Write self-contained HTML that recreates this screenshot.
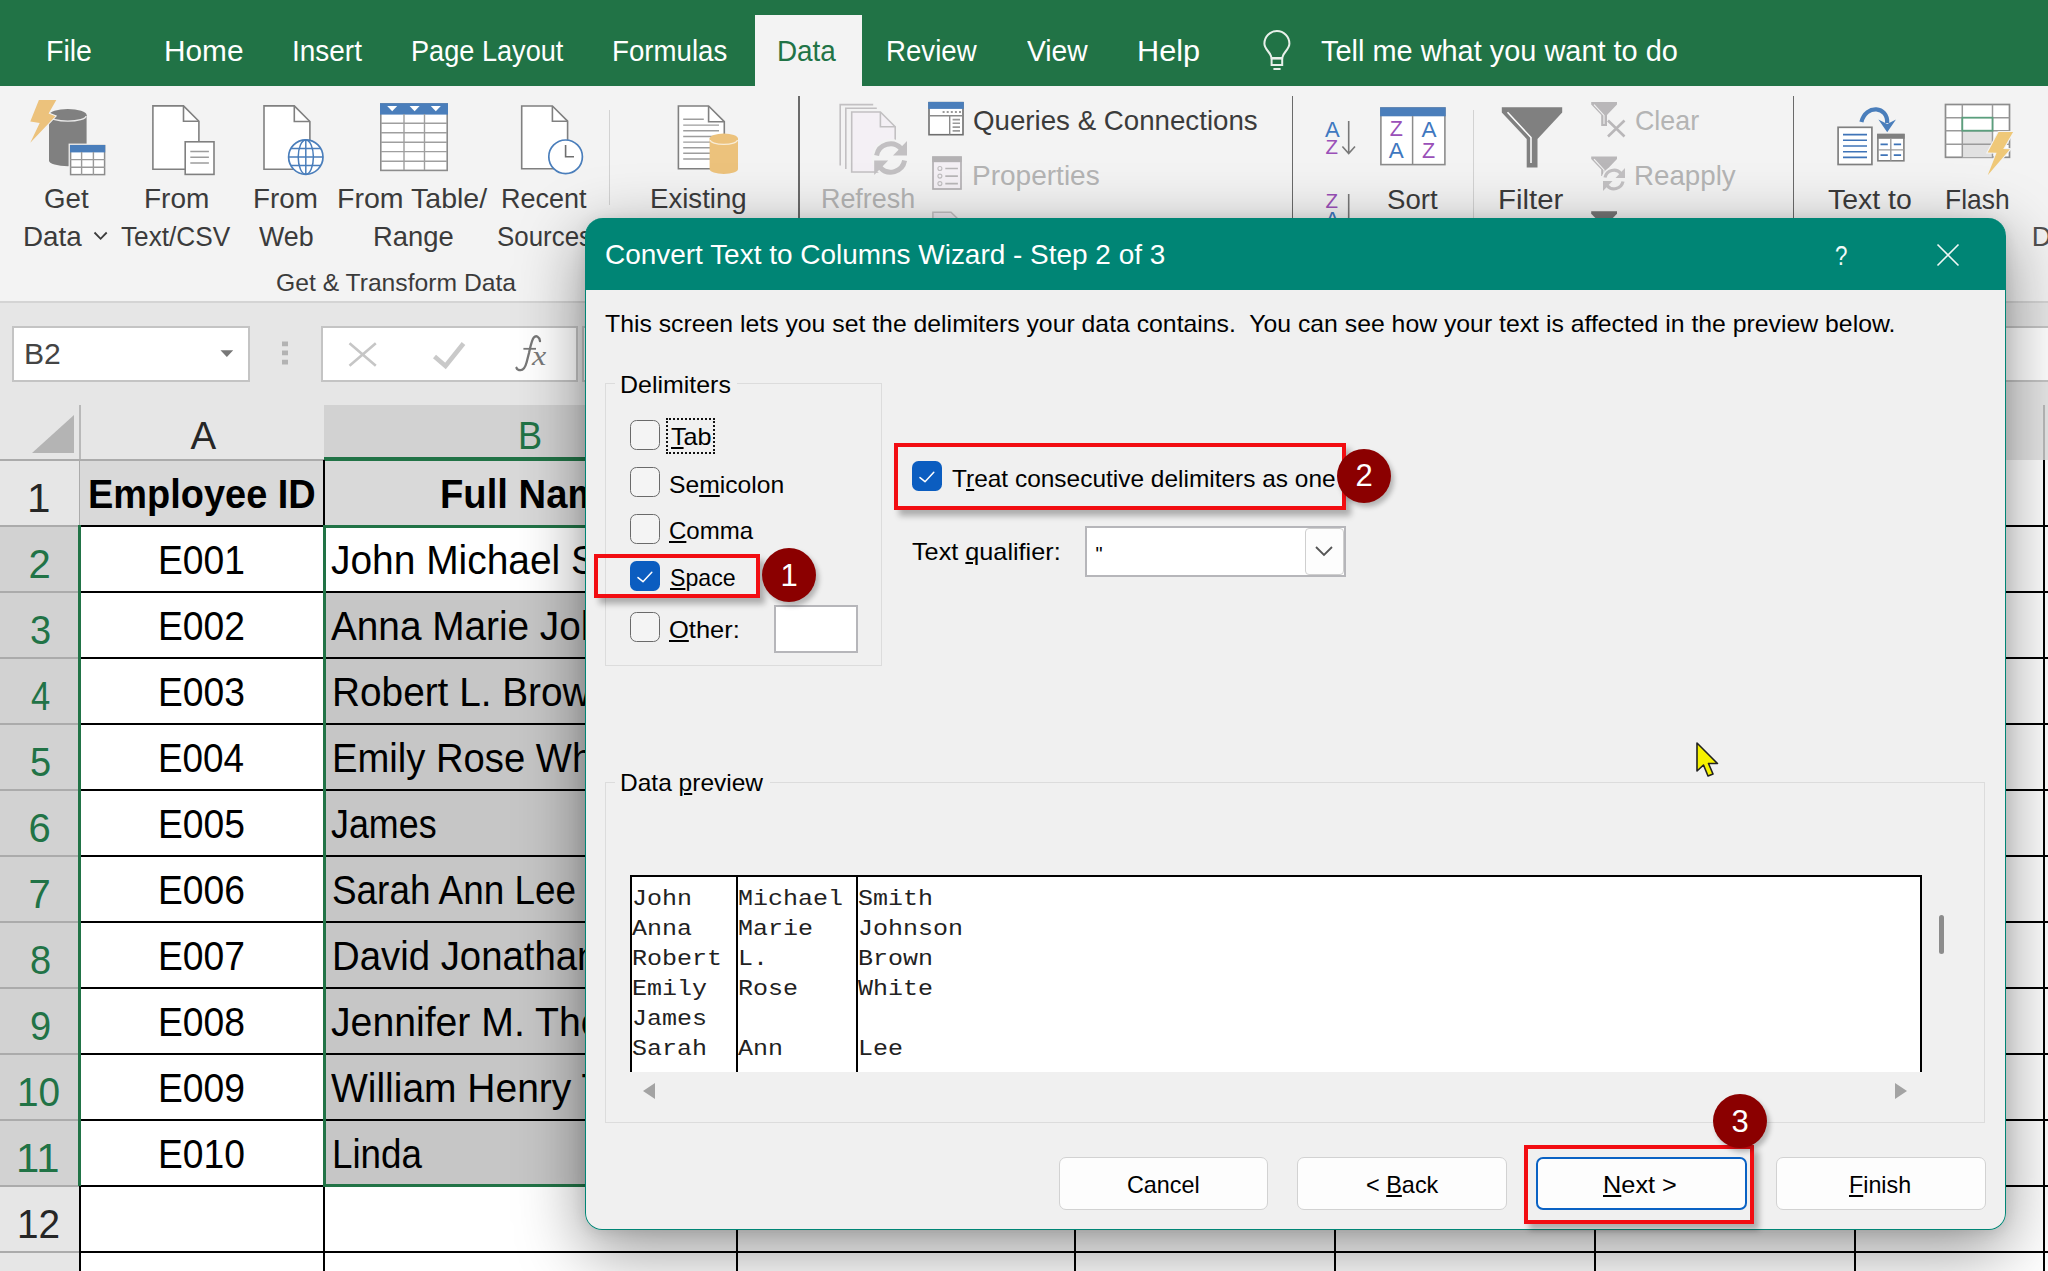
<!DOCTYPE html>
<html><head><meta charset="utf-8"><title>Excel - Convert Text to Columns Wizard</title><style>
html,body{margin:0;padding:0;}
body{width:2048px;height:1271px;overflow:hidden;position:relative;background:#fff;font-family:"Liberation Sans",sans-serif;}
#root{position:absolute;left:0;top:0;width:2048px;height:1271px;overflow:hidden;}
#root div,#root svg{position:absolute;}
.t{position:absolute;white-space:pre;transform-origin:0 50%;}
u{text-decoration:underline;text-decoration-thickness:2px;text-underline-offset:2px;}
</style></head><body><div id="root">
<div style="left:0px;top:0px;width:2048px;height:86.5px;background:#217346;"></div>
<div style="left:755px;top:15px;width:107px;height:72px;background:#f3f3f3;"></div>
<span class="t" style="left:45.51px;top:36.59px;font-size:28.6px;line-height:28.6px;color:#fff;transform:scaleX(0.9960);">File</span>
<span class="t" style="left:163.91px;top:36.59px;font-size:28.6px;line-height:28.6px;color:#fff;transform:scaleX(1.0426);">Home</span>
<span class="t" style="left:292.05px;top:36.59px;font-size:28.6px;line-height:28.6px;color:#fff;transform:scaleX(0.9775);">Insert</span>
<span class="t" style="left:410.6px;top:36.59px;font-size:28.6px;line-height:28.6px;color:#fff;transform:scaleX(0.9487);">Page Layout</span>
<span class="t" style="left:612.07px;top:36.59px;font-size:28.6px;line-height:28.6px;color:#fff;transform:scaleX(0.9669);">Formulas</span>
<span class="t" style="left:886.07px;top:36.59px;font-size:28.6px;line-height:28.6px;color:#fff;transform:scaleX(0.9663);">Review</span>
<span class="t" style="left:1027.0px;top:36.59px;font-size:28.6px;line-height:28.6px;color:#fff;transform:scaleX(0.9869);">View</span>
<span class="t" style="left:1136.85px;top:36.59px;font-size:28.6px;line-height:28.6px;color:#fff;transform:scaleX(1.0733);">Help</span>
<span class="t" style="left:1321.0px;top:36.59px;font-size:28.6px;line-height:28.6px;color:#fff;transform:scaleX(1.0115);">Tell me what you want to do</span>
<span class="t" style="left:777.05px;top:36.59px;font-size:28.6px;line-height:28.6px;color:#217346;transform:scaleX(0.9744);">Data</span>
<div style="left:0px;top:86px;width:2048px;height:215px;background:#f3f3f3;"></div>
<div style="left:0px;top:301px;width:2048px;height:2px;background:#d4d4d4;"></div>
<div style="left:0px;top:303px;width:2048px;height:103px;background:#e6e6e6;"></div>
<div style="left:11.5px;top:326.2px;width:238.3px;height:55.6px;background:#fff;border:2px solid #c4c4c4;box-sizing:border-box;"></div>
<div style="left:320.5px;top:326.2px;width:257px;height:55.6px;background:#fff;border:2px solid #c4c4c4;box-sizing:border-box;"></div>
<div style="left:582px;top:326.2px;width:1470px;height:55.6px;background:#fff;border:2px solid #c4c4c4;box-sizing:border-box;"></div>
<span class="t" style="left:23.92px;top:340.25px;font-size:29px;line-height:29px;color:#444444;transform:scaleX(1.0389);">B2</span>
<div style="left:0px;top:405px;width:2048px;height:866px;background:#fff;"></div>
<div style="left:0px;top:405px;width:2048px;height:55px;background:#e6e6e6;"></div>
<div style="left:324px;top:405px;width:413px;height:55px;background:#d2d2d2;"></div>
<div style="left:324px;top:457px;width:413px;height:3.5px;background:#217346;"></div>
<div style="left:79px;top:405px;width:1.5px;height:55px;background:#b9b9b9;"></div>
<div style="left:736px;top:405px;width:1.5px;height:55px;background:#b9b9b9;"></div>
<div style="left:1074px;top:405px;width:1.5px;height:55px;background:#b9b9b9;"></div>
<div style="left:1334px;top:405px;width:1.5px;height:55px;background:#b9b9b9;"></div>
<div style="left:1594px;top:405px;width:1.5px;height:55px;background:#b9b9b9;"></div>
<div style="left:1854px;top:405px;width:1.5px;height:55px;background:#b9b9b9;"></div>
<div style="left:2043px;top:405px;width:1.5px;height:55px;background:#b9b9b9;"></div>
<div style="left:0px;top:459px;width:324px;height:1.5px;background:#ababab;"></div>
<svg style="left:28px;top:413px;" width="50" height="44" viewBox="0 0 50 44"><path d="M46 2 L46 40 L4 40 Z" fill="#b4b4b4"/></svg>
<span class="t" style="left:190.5px;top:417.01px;font-size:38.5px;line-height:38.5px;color:#262626;">A</span>
<span class="t" style="left:518.49px;top:417.01px;font-size:38.5px;line-height:38.5px;color:#217346;transform:scaleX(0.9381);">B</span>
<div style="left:0px;top:460px;width:80px;height:811px;background:#e6e6e6;"></div>
<div style="left:0px;top:526px;width:80px;height:660px;background:#d2d2d2;"></div>
<div style="left:0px;top:459px;width:80px;height:1.5px;background:#ababab;"></div>
<div style="left:0px;top:525px;width:80px;height:1.5px;background:#ababab;"></div>
<div style="left:0px;top:591px;width:80px;height:1.5px;background:#ababab;"></div>
<div style="left:0px;top:657px;width:80px;height:1.5px;background:#ababab;"></div>
<div style="left:0px;top:723px;width:80px;height:1.5px;background:#ababab;"></div>
<div style="left:0px;top:789px;width:80px;height:1.5px;background:#ababab;"></div>
<div style="left:0px;top:855px;width:80px;height:1.5px;background:#ababab;"></div>
<div style="left:0px;top:921px;width:80px;height:1.5px;background:#ababab;"></div>
<div style="left:0px;top:987px;width:80px;height:1.5px;background:#ababab;"></div>
<div style="left:0px;top:1053px;width:80px;height:1.5px;background:#ababab;"></div>
<div style="left:0px;top:1119px;width:80px;height:1.5px;background:#ababab;"></div>
<div style="left:0px;top:1185px;width:80px;height:1.5px;background:#ababab;"></div>
<div style="left:0px;top:1251px;width:80px;height:1.5px;background:#ababab;"></div>
<div style="left:0px;top:1317px;width:80px;height:1.5px;background:#ababab;"></div>
<div style="left:79px;top:460px;width:1.5px;height:66px;background:#ababab;"></div>
<div style="left:79px;top:1186px;width:1.5px;height:100px;background:#ababab;"></div>
<div style="left:80px;top:460.5px;width:657px;height:66px;background:#d9d9d9;"></div>
<div style="left:324px;top:592px;width:413px;height:594px;background:#c6c6c6;"></div>
<div style="left:80px;top:525px;width:1968px;height:2px;background:#000;"></div>
<div style="left:80px;top:591px;width:1968px;height:2px;background:#000;"></div>
<div style="left:80px;top:657px;width:1968px;height:2px;background:#000;"></div>
<div style="left:80px;top:723px;width:1968px;height:2px;background:#000;"></div>
<div style="left:80px;top:789px;width:1968px;height:2px;background:#000;"></div>
<div style="left:80px;top:855px;width:1968px;height:2px;background:#000;"></div>
<div style="left:80px;top:921px;width:1968px;height:2px;background:#000;"></div>
<div style="left:80px;top:987px;width:1968px;height:2px;background:#000;"></div>
<div style="left:80px;top:1053px;width:1968px;height:2px;background:#000;"></div>
<div style="left:80px;top:1119px;width:1968px;height:2px;background:#000;"></div>
<div style="left:80px;top:1185px;width:1968px;height:2px;background:#000;"></div>
<div style="left:80px;top:1251px;width:1968px;height:2px;background:#000;"></div>
<div style="left:80px;top:1317px;width:1968px;height:2px;background:#000;"></div>
<div style="left:323px;top:460px;width:2px;height:811px;background:#000;"></div>
<div style="left:736px;top:460px;width:2px;height:811px;background:#000;"></div>
<div style="left:1074px;top:526px;width:2px;height:811px;background:#000;"></div>
<div style="left:1334px;top:526px;width:2px;height:811px;background:#000;"></div>
<div style="left:1594px;top:526px;width:2px;height:811px;background:#000;"></div>
<div style="left:1854px;top:526px;width:2px;height:811px;background:#000;"></div>
<div style="left:2043px;top:460px;width:2px;height:811px;background:#000;"></div>
<div style="left:79px;top:1186px;width:2px;height:100px;background:#000;"></div>
<div style="left:77.8px;top:525px;width:3px;height:661px;background:#217346;"></div>
<div style="left:323px;top:525px;width:416px;height:3px;background:#217346;"></div>
<div style="left:323px;top:1184px;width:416px;height:3px;background:#217346;"></div>
<div style="left:322.5px;top:525px;width:3px;height:662px;background:#217346;"></div>
<span class="t" style="left:87.5px;top:474.14px;font-size:40px;line-height:40px;color:#000;font-weight:700;transform:scaleX(0.9486);">Employee ID</span>
<span class="t" style="left:439.59px;top:474.14px;font-size:40px;line-height:40px;color:#000;font-weight:700;transform:scaleX(0.9553);">Full Name</span>
<span class="t" style="left:158.21px;top:540.14px;font-size:40px;line-height:40px;color:#000;transform:scaleX(0.9308);">E001</span>
<span class="t" style="left:331.0px;top:540.14px;font-size:40px;line-height:40px;color:#000;transform:scaleX(0.9724);">John Michael Smith</span>
<span class="t" style="left:158.21px;top:606.14px;font-size:40px;line-height:40px;color:#000;transform:scaleX(0.9308);">E002</span>
<span class="t" style="left:331.2px;top:606.14px;font-size:40px;line-height:40px;color:#000;transform:scaleX(0.9683);">Anna Marie Johnson</span>
<span class="t" style="left:158.21px;top:672.14px;font-size:40px;line-height:40px;color:#000;transform:scaleX(0.9308);">E003</span>
<span class="t" style="left:331.69px;top:672.14px;font-size:40px;line-height:40px;color:#000;transform:scaleX(0.9693);">Robert L. Brown</span>
<span class="t" style="left:158.24px;top:738.14px;font-size:40px;line-height:40px;color:#000;transform:scaleX(0.9205);">E004</span>
<span class="t" style="left:331.73px;top:738.14px;font-size:40px;line-height:40px;color:#000;transform:scaleX(0.9553);">Emily Rose White</span>
<span class="t" style="left:158.21px;top:804.14px;font-size:40px;line-height:40px;color:#000;transform:scaleX(0.9308);">E005</span>
<span class="t" style="left:331.0px;top:804.14px;font-size:40px;line-height:40px;color:#000;transform:scaleX(0.8959);">James</span>
<span class="t" style="left:158.21px;top:870.14px;font-size:40px;line-height:40px;color:#000;transform:scaleX(0.9308);">E006</span>
<span class="t" style="left:331.78px;top:870.14px;font-size:40px;line-height:40px;color:#000;transform:scaleX(0.9218);">Sarah Ann Lee</span>
<span class="t" style="left:158.21px;top:936.14px;font-size:40px;line-height:40px;color:#000;transform:scaleX(0.9308);">E007</span>
<span class="t" style="left:331.73px;top:936.14px;font-size:40px;line-height:40px;color:#000;transform:scaleX(0.9583);">David Jonathan</span>
<span class="t" style="left:158.21px;top:1002.14px;font-size:40px;line-height:40px;color:#000;transform:scaleX(0.9308);">E008</span>
<span class="t" style="left:331.0px;top:1002.14px;font-size:40px;line-height:40px;color:#000;transform:scaleX(0.9796);">Jennifer M. Thompson</span>
<span class="t" style="left:158.21px;top:1068.14px;font-size:40px;line-height:40px;color:#000;transform:scaleX(0.9308);">E009</span>
<span class="t" style="left:331.3px;top:1068.14px;font-size:40px;line-height:40px;color:#000;transform:scaleX(0.9742);">William Henry T</span>
<span class="t" style="left:158.21px;top:1134.14px;font-size:40px;line-height:40px;color:#000;transform:scaleX(0.9308);">E010</span>
<span class="t" style="left:331.84px;top:1134.14px;font-size:40px;line-height:40px;color:#000;transform:scaleX(0.9192);">Linda</span>
<span class="t" style="left:27.43px;top:478.44px;font-size:40px;line-height:40px;color:#262626;transform:scaleX(1.0556);">1</span>
<span class="t" style="left:28.6px;top:544.44px;font-size:40px;line-height:40px;color:#217346;">2</span>
<span class="t" style="left:29.65px;top:610.44px;font-size:40px;line-height:40px;color:#217346;transform:scaleX(0.9500);">3</span>
<span class="t" style="left:30.6px;top:676.44px;font-size:40px;line-height:40px;color:#217346;transform:scaleX(0.8636);">4</span>
<span class="t" style="left:29.65px;top:742.44px;font-size:40px;line-height:40px;color:#217346;transform:scaleX(0.9500);">5</span>
<span class="t" style="left:28.6px;top:808.44px;font-size:40px;line-height:40px;color:#217346;">6</span>
<span class="t" style="left:28.6px;top:874.44px;font-size:40px;line-height:40px;color:#217346;">7</span>
<span class="t" style="left:29.65px;top:940.44px;font-size:40px;line-height:40px;color:#217346;transform:scaleX(0.9500);">8</span>
<span class="t" style="left:29.65px;top:1006.44px;font-size:40px;line-height:40px;color:#217346;transform:scaleX(0.9500);">9</span>
<span class="t" style="left:16.59px;top:1072.44px;font-size:40px;line-height:40px;color:#217346;transform:scaleX(0.9690);">10</span>
<span class="t" style="left:16.36px;top:1138.44px;font-size:40px;line-height:40px;color:#217346;transform:scaleX(1.0462);">11</span>
<span class="t" style="left:16.59px;top:1204.44px;font-size:40px;line-height:40px;color:#262626;transform:scaleX(0.9690);">12</span>
<span class="t" style="left:43.99px;top:184.89px;font-size:27.3px;line-height:27.3px;color:#3b3b3b;transform:scaleX(1.0135);">Get</span>
<span class="t" style="left:23.46px;top:222.89px;font-size:27.3px;line-height:27.3px;color:#3b3b3b;transform:scaleX(1.0181);">Data</span>
<span class="t" style="left:143.95px;top:184.89px;font-size:27.3px;line-height:27.3px;color:#3b3b3b;transform:scaleX(1.0259);">From</span>
<span class="t" style="left:120.5px;top:222.89px;font-size:27.3px;line-height:27.3px;color:#3b3b3b;transform:scaleX(0.9602);">Text/CSV</span>
<span class="t" style="left:253.46px;top:184.89px;font-size:27.3px;line-height:27.3px;color:#3b3b3b;transform:scaleX(1.0176);">From</span>
<span class="t" style="left:259.0px;top:222.89px;font-size:27.3px;line-height:27.3px;color:#3b3b3b;transform:scaleX(0.9828);">Web</span>
<span class="t" style="left:336.91px;top:184.89px;font-size:27.3px;line-height:27.3px;color:#3b3b3b;transform:scaleX(1.0454);">From Table/</span>
<span class="t" style="left:373.49px;top:222.89px;font-size:27.3px;line-height:27.3px;color:#3b3b3b;transform:scaleX(1.0032);">Range</span>
<span class="t" style="left:501.02px;top:184.89px;font-size:27.3px;line-height:27.3px;color:#3b3b3b;transform:scaleX(0.9893);">Recent</span>
<span class="t" style="left:496.55px;top:222.89px;font-size:27.3px;line-height:27.3px;color:#3b3b3b;transform:scaleX(0.9493);">Sources</span>
<span class="t" style="left:650.48px;top:184.89px;font-size:27.3px;line-height:27.3px;color:#3b3b3b;transform:scaleX(1.0119);">Existing</span>
<span class="t" style="left:1386.99px;top:185.89px;font-size:27.3px;line-height:27.3px;color:#3b3b3b;transform:scaleX(1.0105);">Sort</span>
<span class="t" style="left:1497.85px;top:185.89px;font-size:27.3px;line-height:27.3px;color:#3b3b3b;transform:scaleX(1.0757);">Filter</span>
<span class="t" style="left:1828.0px;top:185.89px;font-size:27.3px;line-height:27.3px;color:#3b3b3b;transform:scaleX(1.0408);">Text to</span>
<span class="t" style="left:1944.57px;top:185.89px;font-size:27.3px;line-height:27.3px;color:#3b3b3b;transform:scaleX(0.9675);">Flash</span>
<span class="t" style="left:821.03px;top:184.89px;font-size:27.3px;line-height:27.3px;color:#b4b4b4;transform:scaleX(0.9849);">Refresh</span>
<span class="t" style="left:972.99px;top:106.69px;font-size:27.3px;line-height:27.3px;color:#3b3b3b;transform:scaleX(1.0142);">Queries &amp; Connections</span>
<span class="t" style="left:971.95px;top:161.69px;font-size:27.3px;line-height:27.3px;color:#b4b4b4;transform:scaleX(1.0266);">Properties</span>
<span class="t" style="left:1634.52px;top:106.69px;font-size:27.3px;line-height:27.3px;color:#b4b4b4;transform:scaleX(0.9822);">Clear</span>
<span class="t" style="left:1633.97px;top:161.69px;font-size:27.3px;line-height:27.3px;color:#b4b4b4;transform:scaleX(1.0152);">Reapply</span>
<span class="t" style="left:275.98px;top:270.91px;font-size:24.2px;line-height:24.2px;color:#3b3b3b;transform:scaleX(1.0203);">Get &amp; Transform Data</span>
<span class="t" style="left:2031.8px;top:222.89px;font-size:27.3px;line-height:27.3px;color:#505050;">D</span>
<div style="left:608.5px;top:110px;width:1.5px;height:95px;background:#d2d2d2;"></div>
<div style="left:1472.5px;top:110px;width:1.5px;height:108px;background:#d2d2d2;"></div>
<div style="left:798px;top:96px;width:1.5px;height:200px;background:#6a6a6a;"></div>
<div style="left:1291.5px;top:96px;width:1.5px;height:200px;background:#6a6a6a;"></div>
<div style="left:1792.5px;top:96px;width:1.5px;height:200px;background:#6a6a6a;"></div>
<svg style="left:0;top:86px" width="2048" height="216" viewBox="0 86 2048 216"><path d="M49 115 V160.5 A18.8 5.8 0 0 0 86.6 160.5 V115 Z" fill="#808080"/><ellipse cx="67.8" cy="115" rx="18.8" ry="5.9" fill="#808080"/><path d="M49.6 116 A18.2 5.2 0 0 0 86 116" fill="none" stroke="#e9e9e9" stroke-width="1.3"/><path d="M38.9 99.9 H56.3 L48.6 113.4 L55.4 116.2 L30.3 142.8 L39.7 123 L30.3 121.5 Z" fill="#ecc27c" stroke="#f3f3f3" stroke-width="2" paint-order="stroke"/><rect x="68.6" y="143.6" width="38" height="33" fill="#f3f3f3"/><rect x="70.6" y="145.6" width="34" height="29" fill="#fff" stroke="#8c8c8c" stroke-width="1.5"/><rect x="70" y="145" width="35.2" height="7.4" fill="#4a7ebb"/><path d="M81.6 152 V175 M93.4 152 V175 M70 159.6 H105 M70 167.2 H105" stroke="#9a9a9a" stroke-width="1.4" fill="none"/><path d="M152.9 105.9 H183.5 L198.9 121.30000000000001 V169.2 H152.9 Z" fill="#fff" stroke="#808080" stroke-width="1.6" stroke-linejoin="miter"/><path d="M183.5 105.9 V121.30000000000001 H198.9" fill="none" stroke="#808080" stroke-width="1.6"/><rect x="185.2" y="141.8" width="28.8" height="32.6" fill="#fff" stroke="#808080" stroke-width="1.6"/><path d="M190.3 151.5 H208.9 M190.3 157.2 H208.9 M190.3 162.9 H208.9" stroke="#9d9d9d" stroke-width="1.5"/><path d="M264 105.9 H294.3 L309.9 121.49999999999997 V169.2 H264 Z" fill="#fff" stroke="#808080" stroke-width="1.6" stroke-linejoin="miter"/><path d="M294.3 105.9 V121.49999999999997 H309.9" fill="none" stroke="#808080" stroke-width="1.6"/><circle cx="305.8" cy="157.1" r="17.2" fill="#fff" stroke="#4a7ebb" stroke-width="1.7"/><ellipse cx="305.8" cy="157.1" rx="7.6" ry="17.2" fill="none" stroke="#4a7ebb" stroke-width="1.5"/><path d="M305.8 139.9 V174.3 M288.6 157.1 H323 M291 148.6 H320.6 M291 165.6 H320.6" stroke="#4a7ebb" stroke-width="1.5" fill="none"/><rect x="380.8" y="104" width="66.4" height="66.4" fill="#fff" stroke="#8c8c8c" stroke-width="1.6"/><rect x="380" y="103.2" width="68" height="11.4" fill="#4a7ebb"/><path d="M404 114 V170 M424.5 114 V170 M381 123.3 H447 M381 132.7 H447 M381 142.2 H447 M381 151.6 H447 M381 161.2 H447" stroke="#9f9f9f" stroke-width="1.4" fill="none"/><path d="M387.2 106 H397.2 L392.2 111.2 Z" fill="#fff"/><path d="M409.6 106 H419.6 L414.6 111.2 Z" fill="#fff"/><path d="M430.8 106 H440.8 L435.8 111.2 Z" fill="#fff"/><path d="M521.7 106 H552.4 L567.6 121.20000000000005 V168.8 H521.7 Z" fill="#fff" stroke="#808080" stroke-width="1.6" stroke-linejoin="miter"/><path d="M552.4 106 V121.20000000000005 H567.6" fill="none" stroke="#808080" stroke-width="1.6"/><circle cx="565.6" cy="156.8" r="16.8" fill="#fff" stroke="#4a7ebb" stroke-width="1.7"/><path d="M565.6 145 V156.8 H574" stroke="#6f6f6f" stroke-width="1.6" fill="none"/><path d="M678.4 106 H708.6 L724.3 121.69999999999993 V168.8 H678.4 Z" fill="#fff" stroke="#808080" stroke-width="1.6" stroke-linejoin="miter"/><path d="M708.6 106 V121.69999999999993 H724.3" fill="none" stroke="#808080" stroke-width="1.6"/><path d="M683.2 119.3 H703.8 M683.2 125.1 H719 M683.2 130.8 H719 M683.2 136.5 H719 M683.2 142.1 H719 M683.2 147.7 H719 M683.2 153.3 H719 M683.2 159 H719" stroke="#9d9d9d" stroke-width="1.4"/><path d="M709.6 138.6 V169 A14.2 5 0 0 0 738 169 V138.6 Z" fill="#ecc27c"/><ellipse cx="723.8" cy="138.6" rx="14.2" ry="5.2" fill="#ecc27c"/><path d="M710.2 140 A13.6 4.4 0 0 0 737.4 140" fill="none" stroke="#f8ecd6" stroke-width="1.3"/><path d="M840.2 165.5 V104.6 H873.2" fill="none" stroke="#c2c0c2" stroke-width="1.6"/><path d="M845.8 169 V108.2 H876.8" fill="none" stroke="#c2c0c2" stroke-width="1.6"/><path d="M851.7 112 H880.4 L895.2 126.8 V172 H851.7 Z" fill="#f4f0f5" stroke="#c2c0c2" stroke-width="1.6"/><path d="M880.4 112 V126.8 H895.2" fill="none" stroke="#c2c0c2" stroke-width="1.6"/><circle cx="890.6" cy="158" r="19" fill="#f3f3f3"/><path d="M876.6 155.5 A14.2 14.2 0 0 1 901 148.5" fill="none" stroke="#c2c0c2" stroke-width="5"/><path d="M907 141 V155.5 H893 Z" fill="#c2c0c2"/><path d="M904.6 160.5 A14.2 14.2 0 0 1 880.2 167.5" fill="none" stroke="#c2c0c2" stroke-width="5"/><path d="M874.2 175 V160.5 H888.2 Z" fill="#c2c0c2"/><rect x="929" y="102.7" width="34" height="32" fill="#fff" stroke="#6f6f6f" stroke-width="1.6"/><rect x="928.2" y="101.9" width="35.6" height="7" fill="#4a7ebb"/><path d="M929 115.7 H963 M949.7 115.7 V134.6" stroke="#8a8a8a" stroke-width="1.4" fill="none"/><path d="M942.6 112 H962" stroke="#7a7a7a" stroke-width="1.6" stroke-dasharray="2 2.1" fill="none"/><path d="M952.6 119.6 H960 M952.6 123.3 H960 M952.6 127.1 H960 M952.6 130.9 H960" stroke="#9a9a9a" stroke-width="1.6"/><rect x="933" y="157.2" width="28" height="31.8" fill="#f4f0f5" stroke="#b3b1b3" stroke-width="1.7"/><rect x="932.2" y="156.4" width="29.6" height="5.8" fill="#b3b1b3"/><path d="M945.3 168.5 H957.9 M945.3 176.1 H957.9 M945.3 183.6 H957.9" stroke="#b8b6b8" stroke-width="1.6"/><circle cx="939.9" cy="168.5" r="2" fill="none" stroke="#c0bec0" stroke-width="1.1"/><circle cx="939.9" cy="176.1" r="2" fill="none" stroke="#c0bec0" stroke-width="1.1"/><circle cx="939.9" cy="183.6" r="2" fill="none" stroke="#c0bec0" stroke-width="1.1"/><path d="M932.9 222 V212.2 H951 L958 219 V222" fill="#ece8ee" stroke="#c2c0c2" stroke-width="1.5"/><text x="1332.3" y="136.8" font-family="Liberation Sans, sans-serif" font-size="22" fill="#3f78c0" text-anchor="middle">A</text><text x="1331.8" y="154" font-family="Liberation Sans, sans-serif" font-size="20.5" fill="#9a50b8" text-anchor="middle">Z</text><path d="M1348.7 121 V153 M1342.4 146.5 L1348.7 153.5 L1355 146.5" stroke="#787878" stroke-width="1.6" fill="none"/><text x="1331.8" y="208" font-family="Liberation Sans, sans-serif" font-size="20.5" fill="#9a50b8" text-anchor="middle">Z</text><text x="1332.3" y="226.5" font-family="Liberation Sans, sans-serif" font-size="22" fill="#3f78c0" text-anchor="middle">A</text><path d="M1348.7 194 V222" stroke="#787878" stroke-width="1.6" fill="none"/><rect x="1380.9" y="108" width="64" height="56.6" fill="#fff" stroke="#8c8c8c" stroke-width="1.6"/><rect x="1380.1" y="107.3" width="65.6" height="9" fill="#4a7ebb"/><path d="M1412.6 116 V164.6" stroke="#8c8c8c" stroke-width="1.5"/><text x="1396.4" y="136.4" font-family="Liberation Sans, sans-serif" font-size="21.5" fill="#9a50b8" text-anchor="middle">Z</text><text x="1396.3" y="157.8" font-family="Liberation Sans, sans-serif" font-size="22.5" fill="#3f78c0" text-anchor="middle">A</text><text x="1428.9" y="136.8" font-family="Liberation Sans, sans-serif" font-size="22.5" fill="#3f78c0" text-anchor="middle">A</text><text x="1428.6" y="157.8" font-family="Liberation Sans, sans-serif" font-size="21.5" fill="#9a50b8" text-anchor="middle">Z</text><path d="M1501.8 107.3 H1562.2 V112.5 L1537.5 139 V167.4 H1526.7 V139 L1501.8 112.5 Z" fill="#808080"/><path d="M1507.5 112.3 L1531 137.5 V163" stroke="#fff" stroke-width="1.5" fill="none"/><path d="M1591.2 102 H1617 V104.5 L1607 115 V126 H1601.2 V115 L1591.2 104.5 Z" fill="#b9b7b9"/><path d="M1594 104.6 L1604 115.5 V124" stroke="#f3f3f3" stroke-width="1.1" fill="none"/><path d="M1608 120.5 L1624.5 136.5 M1624.5 120.5 L1608 136.5" stroke="#b9b7b9" stroke-width="2.6" fill="none"/><path d="M1591.2 156.5 H1617 V159 L1607 169.5 V176 H1601.2 V169.5 L1591.2 159 Z" fill="#b9b7b9"/><path d="M1594 159.2 L1604 170 V175" stroke="#f3f3f3" stroke-width="1.1" fill="none"/><circle cx="1614" cy="179.5" r="12.5" fill="#f3f3f3"/><path d="M1605 177.5 A9.2 9.2 0 0 1 1621 173.5" fill="none" stroke="#c2c0c2" stroke-width="3.2"/><path d="M1625 168 V178 H1615.5 Z" fill="#c2c0c2"/><path d="M1623 181.5 A9.2 9.2 0 0 1 1607 185.5" fill="none" stroke="#c2c0c2" stroke-width="3.2"/><path d="M1603 191 V181 H1612.5 Z" fill="#c2c0c2"/><path d="M1591.2 211.2 H1617 V213.7 L1607 224 H1601.2 L1591.2 213.7 Z" fill="#767676"/><rect x="1838.1" y="127.3" width="33.8" height="37.2" fill="#fff" stroke="#808080" stroke-width="1.7"/><path d="M1843 134.6 H1867 M1843 140.3 H1867 M1843 146 H1867 M1843 151.7 H1867 M1843 157.4 H1867" stroke="#3f74b8" stroke-width="1.6"/><rect x="1877.9" y="134.6" width="26" height="26.2" fill="#fff" stroke="#808080" stroke-width="1.6"/><rect x="1877.1" y="133.8" width="27.6" height="5" fill="#808080"/><path d="M1890.8 138.8 V160.8 M1878 149.9 H1904" stroke="#9a9a9a" stroke-width="1.4"/><path d="M1880.5 144.3 H1887.8 M1893.8 144.3 H1901.1 M1880.5 155.2 H1887.8 M1893.8 155.2 H1901.1" stroke="#3f74b8" stroke-width="1.7"/><path d="M1861.4 122 C1866 104 1888 106 1887.2 123" fill="none" stroke="#4a7ebb" stroke-width="4.2"/><path d="M1878.4 119.4 L1887.2 132.2 L1896 119.4 L1887.2 124 Z" fill="#4a7ebb"/><rect x="1945.5" y="104.5" width="64" height="52.8" fill="#fff" stroke="#8c8c8c" stroke-width="1.7"/><rect x="1962.3" y="130.7" width="30.2" height="26.6" fill="#e1e1e1"/><path d="M1962.3 104.5 V157.3 M1992.5 104.5 V157.3 M1945.5 117.7 H2009.5 M1945.5 130.7 H2009.5 M1945.5 144.3 H2009.5" stroke="#9a9a9a" stroke-width="1.5" fill="none"/><rect x="1962.3" y="117.7" width="30.2" height="13" fill="#fff" stroke="#5b9f7d" stroke-width="1.8"/><path d="M1998.6 132 H2013.1 L2003.2 148.9 L2010 149.3 L1987.7 175.2 L1996.6 152.7 L1987.7 152.5 Z" fill="#efc878" stroke="#f3f3f3" stroke-width="2.2" paint-order="stroke"/></svg>
<svg style="left:92px;top:229px;" width="18" height="14" viewBox="0 0 18 14"><path d="M2.5 3.5 L8.6 9.8 L14.7 3.5" stroke="#3b3b3b" stroke-width="1.8" fill="none"/></svg>
<svg style="left:1255px;top:22px" width="44" height="54" viewBox="1255 22 44 54"><path d="M1271.6 58 C1271 52 1264.4 50 1264.4 43.6 A12.5 12.5 0 0 1 1289.4 43.6 C1289.4 50 1282.8 52 1282.2 58 Z" fill="none" stroke="#e8f0ea" stroke-width="2"/><rect x="1271.6" y="58.6" width="10.6" height="6.4" fill="none" stroke="#e8f0ea" stroke-width="2"/><path d="M1273.4 69 H1280.6" stroke="#e8f0ea" stroke-width="2"/></svg>
<svg style="left:200px;top:320px" width="400" height="70" viewBox="200 320 400 70"><path d="M220.5 350.2 H233.2 L226.85 357 Z" fill="#777"/><path d="M282 341.4 h6 v4.8 h-6z M282 350.4 h6 v4.8 h-6z M282 359.8 h6 v4.8 h-6z" fill="#b3b3b3"/><path d="M349.5 343.3 L375.8 365.8 M375.8 343.3 L349.5 365.8" stroke="#c6c6c6" stroke-width="2.6" fill="none"/><path d="M434.5 356.5 L445.5 366 L463.5 343.5" stroke="#c9c9c9" stroke-width="4.6" fill="none"/></svg>
<svg style="left:510px;top:330px" width="40" height="46" viewBox="510 330 40 46"><path d="M540 341.2 C539.6 336.6 536 334.9 533.8 337.6 C531.6 340.4 530.6 346 529 353 L526.7 362 C525.5 366.6 523.8 370.2 520.6 370.2 C518.4 370.2 517 369.2 516.5 367.8" fill="none" stroke="#777" stroke-width="2.3" stroke-linecap="round"/><path d="M523.4 348.8 H536" stroke="#777" stroke-width="1.8"/></svg>
<span class="t" style="left:531.67px;top:341.77px;font-size:27.5px;line-height:27.5px;color:#7a7a7a;font-family:'Liberation Serif', serif;font-style:italic;transform:scaleX(1.1692);">x</span>
<div style="left:585.3px;top:218.2px;width:1420.7px;height:1011.8px;background:linear-gradient(#008575 0,#008575 71.80000000000001px,#f0f0f0 71.80000000000001px);border-radius:18px 18px 17px 17px;box-shadow:0 20px 66px 2px rgba(0,0,0,0.40), 0 2px 14px rgba(0,0,0,0.10);box-sizing:border-box;border:1.7px solid #008575;border-top-width:0;"></div>
<span class="t" style="left:604.98px;top:240.72px;font-size:27.5px;line-height:27.5px;color:#fff;transform:scaleX(1.0164);">Convert Text to Columns Wizard - Step 2 of 3</span>
<span class="t" style="left:1835px;top:241.80px;font-size:28px;line-height:28px;color:#f2faf8;transform:scaleX(0.8);">?</span>
<svg style="left:1936px;top:243px;" width="24" height="24" viewBox="0 0 24 24"><path d="M1.5 1.5 L22.5 22.5 M22.5 1.5 L1.5 22.5" stroke="#f0f8f6" stroke-width="1.6" fill="none"/></svg>
<span class="t" style="left:604.8px;top:312.62px;font-size:23.6px;line-height:23.6px;color:#000;transform:scaleX(1.0504);">This screen lets you set the delimiters your data contains.  You can see how your text is affected in the preview below.</span>
<div style="left:605px;top:383px;width:277px;height:283px;border:1.5px solid #dcdcdc;box-sizing:border-box;"></div>
<div style="left:615px;top:375px;width:122px;height:20px;background:#f0f0f0;"></div>
<span class="t" style="left:619.94px;top:373.52px;font-size:23.6px;line-height:23.6px;color:#000;transform:scaleX(1.0575);">Delimiters</span>
<div style="left:630.3px;top:420px;width:30px;height:30px;background:#f4f4f4;border:1.6px solid #6a6a6a;border-radius:6.5px;box-sizing:border-box;"></div>
<div style="left:630.3px;top:467px;width:30px;height:30px;background:#f4f4f4;border:1.6px solid #6a6a6a;border-radius:6.5px;box-sizing:border-box;"></div>
<div style="left:630.3px;top:514px;width:30px;height:30px;background:#f4f4f4;border:1.6px solid #6a6a6a;border-radius:6.5px;box-sizing:border-box;"></div>
<div style="left:630.3px;top:561px;width:30px;height:30px;background:#0b5dc0;border-radius:6.5px;"></div>
<svg style="left:630.3px;top:561px;" width="30" height="30" viewBox="0 0 30 30"><path d="M8 16.6 L13 20.7 L21.8 11.2" stroke="#fff" stroke-width="1.5" fill="none" stroke-linecap="round" stroke-linejoin="round"/></svg>
<div style="left:630.3px;top:612px;width:30px;height:30px;background:#f4f4f4;border:1.6px solid #6a6a6a;border-radius:6.5px;box-sizing:border-box;"></div>
<span class="t" style="left:670.5px;top:426.02px;font-size:23.6px;line-height:23.6px;color:#000;transform:scaleX(1.0681);"><u>T</u>ab</span>
<div style="left:666px;top:418px;width:49px;height:36px;border:2px dotted #111;box-sizing:border-box;"></div>
<span class="t" style="left:669.45px;top:473.52px;font-size:23.6px;line-height:23.6px;color:#000;transform:scaleX(1.0459);">Se<u>m</u>icolon</span>
<span class="t" style="left:669.48px;top:520.02px;font-size:23.6px;line-height:23.6px;color:#000;transform:scaleX(1.0186);"><u>C</u>omma</span>
<span class="t" style="left:669.52px;top:567.02px;font-size:23.6px;line-height:23.6px;color:#000;transform:scaleX(0.9806);"><u>S</u>pace</span>
<span class="t" style="left:669.42px;top:618.52px;font-size:23.6px;line-height:23.6px;color:#000;transform:scaleX(1.0792);"><u>O</u>ther:</span>
<div style="left:774px;top:605px;width:84px;height:48px;background:#fff;border:2px solid #b6b6ba;box-sizing:border-box;"></div>
<div style="left:911.5px;top:461px;width:30px;height:30px;background:#0b5dc0;border-radius:6.5px;"></div>
<svg style="left:911.5px;top:461px;" width="30" height="30" viewBox="0 0 30 30"><path d="M8 16.6 L13 20.7 L21.8 11.2" stroke="#fff" stroke-width="1.5" fill="none" stroke-linecap="round" stroke-linejoin="round"/></svg>
<span class="t" style="left:951.5px;top:467.52px;font-size:23.6px;line-height:23.6px;color:#000;transform:scaleX(1.0361);">T<u>r</u>eat consecutive delimiters as one</span>
<span class="t" style="left:911.5px;top:541.02px;font-size:23.6px;line-height:23.6px;color:#000;transform:scaleX(1.0695);">Text <u>q</u>ualifier:</span>
<div style="left:1084.5px;top:526px;width:261px;height:51px;background:#fff;border:2px solid #b6b6ba;box-sizing:border-box;"></div>
<div style="left:1305px;top:528px;width:39px;height:47px;background:#fdfdfd;border:1.5px solid #cfcfcf;border-radius:4px;box-sizing:border-box;"></div>
<svg style="left:1313px;top:541px;" width="22" height="20" viewBox="0 0 22 20"><path d="M3 6 L11 14 L19 6" stroke="#555" stroke-width="1.8" fill="none"/></svg>
<span class="t" style="left:1095.5px;top:543.57px;font-size:20px;line-height:20px;color:#000;">"</span>
<div style="left:594px;top:553.5px;width:166px;height:44.0px;border:4px solid #f20d12;box-sizing:border-box;box-shadow:5px 6px 6px rgba(0,0,0,0.28);"></div>
<div style="left:762px;top:548px;width:54px;height:54px;border-radius:50%;background:#8b0000;box-shadow:3px 4px 5px rgba(0,0,0,0.25);"></div>
<span class="t" style="left:780.5px;top:559.76px;font-size:31px;line-height:31px;color:#fff;">1</span>
<div style="left:894px;top:443px;width:452px;height:66.5px;border:4px solid #f20d12;box-sizing:border-box;box-shadow:5px 6px 6px rgba(0,0,0,0.28);"></div>
<div style="left:1337px;top:448.5px;width:54px;height:54px;border-radius:50%;background:#8b0000;box-shadow:3px 4px 5px rgba(0,0,0,0.25);"></div>
<span class="t" style="left:1355.5px;top:460.26px;font-size:31px;line-height:31px;color:#fff;">2</span>
<div style="left:605px;top:782px;width:1380px;height:341px;border:1.5px solid #dcdcdc;box-sizing:border-box;"></div>
<div style="left:615px;top:772px;width:155px;height:22px;background:#f0f0f0;"></div>
<span class="t" style="left:619.96px;top:772.02px;font-size:23.6px;line-height:23.6px;color:#000;transform:scaleX(1.0388);">Data <u>p</u>review</span>
<div style="left:631px;top:876px;width:1291px;height:196px;background:#fff;"></div>
<div style="left:630.3px;top:875px;width:1291.7px;height:1.7px;background:#000;"></div>
<div style="left:630.3px;top:875px;width:1.7px;height:197px;background:#000;"></div>
<div style="left:1920.3px;top:875px;width:1.7px;height:197px;background:#000;"></div>
<div style="left:736px;top:876px;width:1.8px;height:196px;background:#000;"></div>
<div style="left:856.3px;top:876px;width:1.8px;height:196px;background:#000;"></div>
<span class="t" style="left:631.5px;top:888.98px;font-size:22.2px;line-height:22.2px;color:#222;font-family:'Liberation Mono', monospace;transform:scaleX(1.126);">John</span>
<span class="t" style="left:737.5px;top:888.98px;font-size:22.2px;line-height:22.2px;color:#222;font-family:'Liberation Mono', monospace;transform:scaleX(1.126);">Michael</span>
<span class="t" style="left:857.5px;top:888.98px;font-size:22.2px;line-height:22.2px;color:#222;font-family:'Liberation Mono', monospace;transform:scaleX(1.126);">Smith</span>
<span class="t" style="left:631.5px;top:918.98px;font-size:22.2px;line-height:22.2px;color:#222;font-family:'Liberation Mono', monospace;transform:scaleX(1.126);">Anna</span>
<span class="t" style="left:737.5px;top:918.98px;font-size:22.2px;line-height:22.2px;color:#222;font-family:'Liberation Mono', monospace;transform:scaleX(1.126);">Marie</span>
<span class="t" style="left:857.5px;top:918.98px;font-size:22.2px;line-height:22.2px;color:#222;font-family:'Liberation Mono', monospace;transform:scaleX(1.126);">Johnson</span>
<span class="t" style="left:631.5px;top:948.98px;font-size:22.2px;line-height:22.2px;color:#222;font-family:'Liberation Mono', monospace;transform:scaleX(1.126);">Robert</span>
<span class="t" style="left:737.5px;top:948.98px;font-size:22.2px;line-height:22.2px;color:#222;font-family:'Liberation Mono', monospace;transform:scaleX(1.126);">L.</span>
<span class="t" style="left:857.5px;top:948.98px;font-size:22.2px;line-height:22.2px;color:#222;font-family:'Liberation Mono', monospace;transform:scaleX(1.126);">Brown</span>
<span class="t" style="left:631.5px;top:978.98px;font-size:22.2px;line-height:22.2px;color:#222;font-family:'Liberation Mono', monospace;transform:scaleX(1.126);">Emily</span>
<span class="t" style="left:737.5px;top:978.98px;font-size:22.2px;line-height:22.2px;color:#222;font-family:'Liberation Mono', monospace;transform:scaleX(1.126);">Rose</span>
<span class="t" style="left:857.5px;top:978.98px;font-size:22.2px;line-height:22.2px;color:#222;font-family:'Liberation Mono', monospace;transform:scaleX(1.126);">White</span>
<span class="t" style="left:631.5px;top:1008.98px;font-size:22.2px;line-height:22.2px;color:#222;font-family:'Liberation Mono', monospace;transform:scaleX(1.126);">James</span>
<span class="t" style="left:631.5px;top:1038.98px;font-size:22.2px;line-height:22.2px;color:#222;font-family:'Liberation Mono', monospace;transform:scaleX(1.126);">Sarah</span>
<span class="t" style="left:737.5px;top:1038.98px;font-size:22.2px;line-height:22.2px;color:#222;font-family:'Liberation Mono', monospace;transform:scaleX(1.126);">Ann</span>
<span class="t" style="left:857.5px;top:1038.98px;font-size:22.2px;line-height:22.2px;color:#222;font-family:'Liberation Mono', monospace;transform:scaleX(1.126);">Lee</span>
<svg style="left:640px;top:1081px;" width="18" height="20" viewBox="0 0 18 20"><path d="M15 2 L15 18 L3 10 Z" fill="#a3a3a3"/></svg>
<svg style="left:1892px;top:1081px;" width="18" height="20" viewBox="0 0 18 20"><path d="M3 2 L3 18 L15 10 Z" fill="#a3a3a3"/></svg>
<div style="left:1939px;top:915px;width:5px;height:39px;background:#8c8c8c;border-radius:2.5px;"></div>
<div style="left:1058.5px;top:1157px;width:209.5px;height:53px;background:#fdfdfd;border:1.5px solid #d2d2d2;border-radius:7px;box-sizing:border-box;"></div>
<span class="t" style="left:1127.01px;top:1173.52px;font-size:23.6px;line-height:23.6px;color:#000;transform:scaleX(0.9902);">Cancel</span>
<div style="left:1297px;top:1157px;width:210px;height:53px;background:#fdfdfd;border:1.5px solid #d2d2d2;border-radius:7px;box-sizing:border-box;"></div>
<span class="t" style="left:1366.01px;top:1173.52px;font-size:23.6px;line-height:23.6px;color:#000;transform:scaleX(0.9932);">&lt; <u>B</u>ack</span>
<div style="left:1536px;top:1157px;width:210.5px;height:53px;background:#fdfdfd;border:2px solid #0a62c4;border-radius:7px;box-sizing:border-box;"></div>
<span class="t" style="left:1602.93px;top:1173.52px;font-size:23.6px;line-height:23.6px;color:#000;transform:scaleX(1.0735);"><u>N</u>ext &gt;</span>
<div style="left:1775.5px;top:1157px;width:210.0px;height:53px;background:#fdfdfd;border:1.5px solid #d2d2d2;border-radius:7px;box-sizing:border-box;"></div>
<span class="t" style="left:1849.01px;top:1173.52px;font-size:23.6px;line-height:23.6px;color:#000;transform:scaleX(0.9866);"><u>F</u>inish</span>
<div style="left:1523.5px;top:1145px;width:230.0px;height:79px;border:4px solid #f20d12;box-sizing:border-box;box-shadow:5px 6px 6px rgba(0,0,0,0.28);"></div>
<div style="left:1713px;top:1094px;width:54px;height:54px;border-radius:50%;background:#8b0000;box-shadow:3px 4px 5px rgba(0,0,0,0.25);"></div>
<span class="t" style="left:1731.5px;top:1105.76px;font-size:31px;line-height:31px;color:#fff;">3</span>
<svg style="left:1692px;top:740px;" width="30" height="42" viewBox="0 0 30 42"><path d="M5 3 L5 31 L11.5 25 L16 36 L21 34 L16.5 23.5 L25.5 23.5 Z" fill="#f6f200" stroke="#222" stroke-width="1.6" stroke-linejoin="round"/></svg>
</div></body></html>
